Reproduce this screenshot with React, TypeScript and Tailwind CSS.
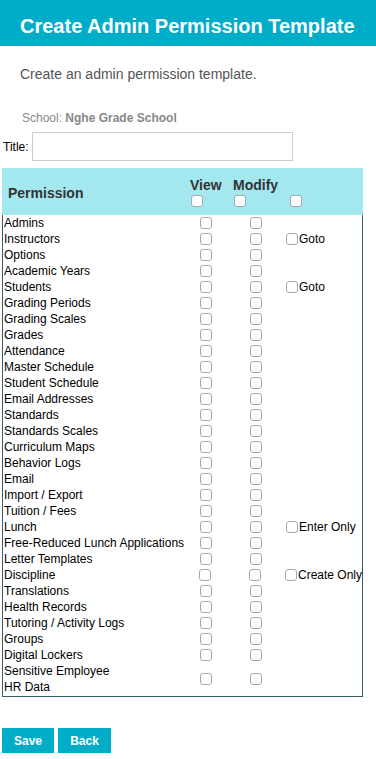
import React from "react";

const rows: { name: React.ReactNode; extra?: string; tall?: boolean }[] = [
  { name: "Admins" },
  { name: "Instructors", extra: "Goto" },
  { name: "Options" },
  { name: "Academic Years" },
  { name: "Students", extra: "Goto" },
  { name: "Grading Periods" },
  { name: "Grading Scales" },
  { name: "Grades" },
  { name: "Attendance" },
  { name: "Master Schedule" },
  { name: "Student Schedule" },
  { name: "Email Addresses" },
  { name: "Standards" },
  { name: "Standards Scales" },
  { name: "Curriculum Maps" },
  { name: "Behavior Logs" },
  { name: "Email" },
  { name: "Import / Export" },
  { name: "Tuition / Fees" },
  { name: "Lunch", extra: "Enter Only" },
  { name: "Free-Reduced Lunch Applications" },
  { name: "Letter Templates" },
  { name: "Discipline", extra: "Create Only" },
  { name: "Translations" },
  { name: "Health Records" },
  { name: "Tutoring / Activity Logs" },
  { name: "Groups" },
  { name: "Digital Lockers" },
  {
    name: (
      <>
        Sensitive Employee
        <br />
        HR Data
      </>
    ),
    tall: true,
  },
];

function Box() {
  return (
    <span className="inline-block w-[12px] h-[12px] rounded-[3px] border border-[#a9a9a9] bg-white shrink-0" />
  );
}

export default function App() {
  return (
    <div
      className="w-[376px] min-h-[759px] bg-white text-black"
      style={{ fontFamily: '"Liberation Sans", Arial, sans-serif' }}
    >
      <div className="h-[46px] bg-[#00adc8] flex items-center pl-[20px]">
        <h1 className="text-[20px] font-bold text-white leading-none pt-[6px]">
          Create Admin Permission Template
        </h1>
      </div>
      <p className="text-[14px] text-[#555] pl-[20px] mt-[20px] leading-[16px]">
        Create an admin permission template.
      </p>
      <p className="text-[12px] text-[#888] pl-[22px] mt-[29px] leading-[14px]">
        School: <span className="font-bold">Nghe Grade School</span>
      </p>
      <div className="flex items-center mt-[7px] pl-[3px]">
        <span className="text-[12px] w-[29px]">Title:</span>
        <div className="w-[261px] h-[29px] border border-[#ccc] bg-white" />
      </div>
      <div className="ml-[2px] w-[361px] mt-[7px]">
        <div className="h-[47px] bg-[#a4e8ef] flex items-center text-[#333] font-bold text-[14px]">
          <div className="pl-[6px] w-[188px] pt-[4px]">Permission</div>
          <div className="flex flex-col w-[43px] pt-[1px]">
            <span className="leading-[16px]">View</span>
            <span className="mt-[2px] ml-[1px] flex">
              <Box />
            </span>
          </div>
          <div className="flex flex-col w-[57px] pt-[1px]">
            <span className="leading-[16px]">Modify</span>
            <span className="mt-[2px] ml-[1px] flex">
              <Box />
            </span>
          </div>
          <div className="flex pt-[19px]">
            <Box />
          </div>
        </div>
        <div className="border-l border-r border-b border-[#335f63] pb-[1px]">
          {rows.map((r, i) => (
            <div
              key={i}
              className={`flex items-center text-[12px] leading-[16px] whitespace-nowrap ${r.tall ? "h-[32px]" : "h-[16px]"}`}
            >
              <div className="w-[197px] pl-[1px]">{r.name}</div>
              <div className="w-[50px] flex">
                <Box />
              </div>
              <div className="w-[36px] flex">
                <Box />
              </div>
              {r.extra && (
                <div className="flex items-center gap-[1px]">
                  <Box />
                  <span>{r.extra}</span>
                </div>
              )}
            </div>
          ))}
        </div>
      </div>
      <div className="flex gap-[4px] ml-[2px] mt-[31px]">
        <button className="w-[52px] h-[25px] bg-[#00adc8] text-white font-bold text-[12px]">
          Save
        </button>
        <button className="w-[53px] h-[25px] bg-[#00adc8] text-white font-bold text-[12px]">
          Back
        </button>
      </div>
    </div>
  );
}
